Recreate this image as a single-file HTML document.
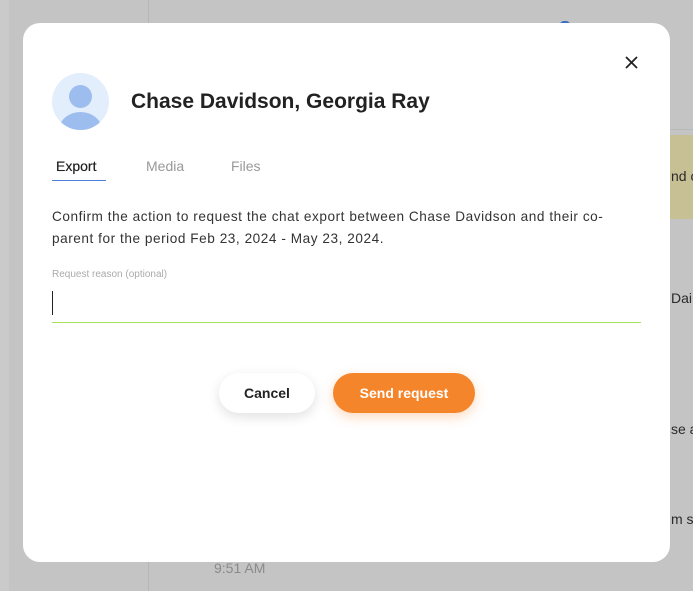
<!DOCTYPE html>
<html><head><style>
*{margin:0;padding:0;box-sizing:border-box}
body{width:693px;height:591px;overflow:hidden;background:#c4c4c4;font-family:"Liberation Sans",sans-serif;position:relative}
.bgt{position:absolute;color:#2a2a2a;font-size:14px;white-space:nowrap}
</style></head><body>
<div style="position:absolute;left:0;top:0;width:9px;height:591px;background:#cacaca"></div>
<div style="position:absolute;left:148px;top:0;width:1px;height:591px;background:#b6b6b6"></div>
<div style="position:absolute;left:149px;top:129px;width:544px;height:1px;background:#b8b8b8"></div>
<div style="position:absolute;left:560px;top:21px;width:10px;height:4px;border-radius:5px 5px 0 0;background:#3a6fc4"></div>
<div style="position:absolute;left:670px;top:135px;width:23px;height:84px;background:#c8c095"></div>
<div class="bgt" style="left:671px;top:168px">nd o</div>
<div class="bgt" style="left:671px;top:290px">Dai</div>
<div class="bgt" style="left:671px;top:421px">se a</div>
<div class="bgt" style="left:671px;top:511px">m s</div>
<div class="bgt" style="left:214px;top:560px;color:#8a8a8a">9:51 AM</div>

<div style="position:absolute;left:23px;top:23px;width:647px;height:539px;background:#fff;border-radius:17px;overflow:hidden">
  <svg style="position:absolute;left:602px;top:33px" width="13" height="13" viewBox="0 0 13 13"><path d="M1 1L12 12M12 1L1 12" stroke="#222" stroke-width="1.8"/></svg>
  <div style="position:absolute;left:29px;top:50px;width:57px;height:57px;border-radius:50%;background:#e3eefc;overflow:hidden">
    <div style="position:absolute;left:17px;top:12px;width:23px;height:23px;border-radius:50%;background:#9dbdee"></div>
    <div style="position:absolute;left:7px;top:39px;width:43px;height:36px;border-radius:50%;background:#9dbdee"></div>
  </div>
  <div style="position:absolute;left:108px;top:67px;font-size:21px;font-weight:bold;color:#222;white-space:nowrap">Chase Davidson, Georgia Ray</div>
  <div style="position:absolute;left:33px;top:135px;font-size:14px;color:#222;text-shadow:0 0 0.4px #222">Export</div>
  <div style="position:absolute;left:29px;top:157px;width:54px;height:1px;background:#4c7fd8"></div>
  <div style="position:absolute;left:123px;top:135px;font-size:14px;color:#999">Media</div>
  <div style="position:absolute;left:208px;top:135px;font-size:14px;color:#999">Files</div>
  <div style="position:absolute;left:29px;top:183px;width:600px;font-size:13.6px;line-height:22px;color:#333;letter-spacing:0.55px;white-space:nowrap">Confirm the action to request the chat export between Chase Davidson and their co-<br>parent for the period Feb 23, 2024 - May 23, 2024.</div>
  <div style="position:absolute;left:29px;top:246px;font-size:10px;color:#aaa">Request reason (optional)</div>
  <div style="position:absolute;left:29px;top:268px;width:1px;height:24px;background:#222"></div>
  <div style="position:absolute;left:29px;top:299px;width:589px;height:1px;background:#a8e05a"></div>
  <div style="position:absolute;left:196px;top:350px;width:96px;height:40px;border-radius:20px;background:#fff;box-shadow:0 4px 12px rgba(0,0,0,.12);text-align:center;line-height:40px;font-size:14px;font-weight:bold;color:#222">Cancel</div>
  <div style="position:absolute;left:310px;top:350px;width:142px;height:40px;border-radius:20px;background:#f5852a;box-shadow:0 4px 12px rgba(245,133,42,.3);text-align:center;line-height:40px;font-size:14px;font-weight:bold;color:#fff">Send request</div>
</div>
</body></html>
